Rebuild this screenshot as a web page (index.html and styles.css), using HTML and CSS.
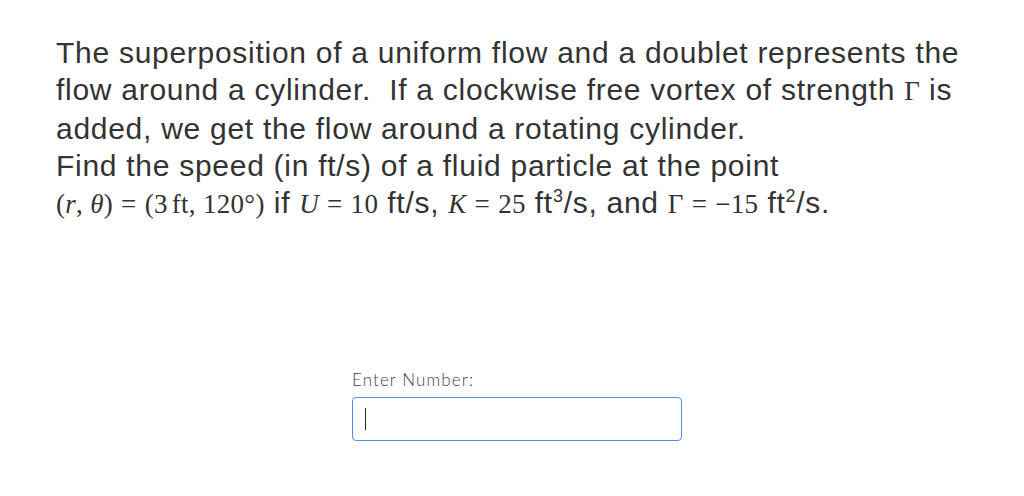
FILE: index.html
```html
<!DOCTYPE html>
<html>
<head>
<meta charset="utf-8">
<link rel="stylesheet" href="styles.css">
</head>
<body>
<div class="page">
  <p class="question">The superposition of a uniform flow and a doublet represents the flow around a cylinder.&nbsp; If a clockwise free vortex of strength <span class="m">Γ</span> is added, we get the flow around a rotating cylinder.<br>Find the speed (in ft/s) of a fluid particle at the point <span class="m">(<i>r</i>, <i>θ</i>)<span class="op">=</span>(3<span class="thin"></span>ft, 120°)</span> if <span class="m"><i>U</i><span class="op">=</span>10</span> ft/s, <span class="m"><i>K</i><span class="op">=</span>25</span> ft<sup>3</sup>/s, and <span class="m">Γ<span class="op">=</span>−15</span> ft<sup>2</sup>/s.</p>
  <div class="answer">
    <label class="label">Enter Number:</label>
    <div class="input"><span class="caret"></span></div>
  </div>
</div>
</body>
</html>
```
FILE: styles.css
```css
html, body {
  margin: 0;
  padding: 0;
  background: #fff;
}
.page {
  padding: 34px 0 0 56px;
  width: 920px;
}
.question {
  margin: 0;
  font-family: "Liberation Sans", Arial, sans-serif;
  font-size: 30px;
  letter-spacing: 0.72px;
  line-height: 37px;
  color: #333;
}
.m {
  font-family: "Liberation Serif", "Times New Roman", serif;
  font-size: 27px;
  letter-spacing: 0.3px;
  white-space: nowrap;
  color: #333;
}
.m i { font-style: italic; }
.op { margin: 0 8px; }
.thin { display: inline-block; width: 4px; }
sup {
  font-size: 18px;
  line-height: 0;
  vertical-align: 11px;
}
.answer {
  display: flex;
  flex-direction: column;
  margin: 146px 0 0 296px;
  width: 330px;
}
.label {
  font-family: "Lato", "Open Sans", sans-serif;
  font-weight: 300;
  font-size: 17px;
  color: #444;
  margin-bottom: 7px;
  letter-spacing: 1.1px;
}
.input {
  box-sizing: border-box;
  height: 44px;
  width: 330px;
  border: 1.5px solid #4a90e2;
  border-radius: 4px;
  padding: 8px 12px;
  display: flex;
  align-items: center;
}
.caret {
  width: 1px;
  height: 22px;
  background: #222;
}
```
